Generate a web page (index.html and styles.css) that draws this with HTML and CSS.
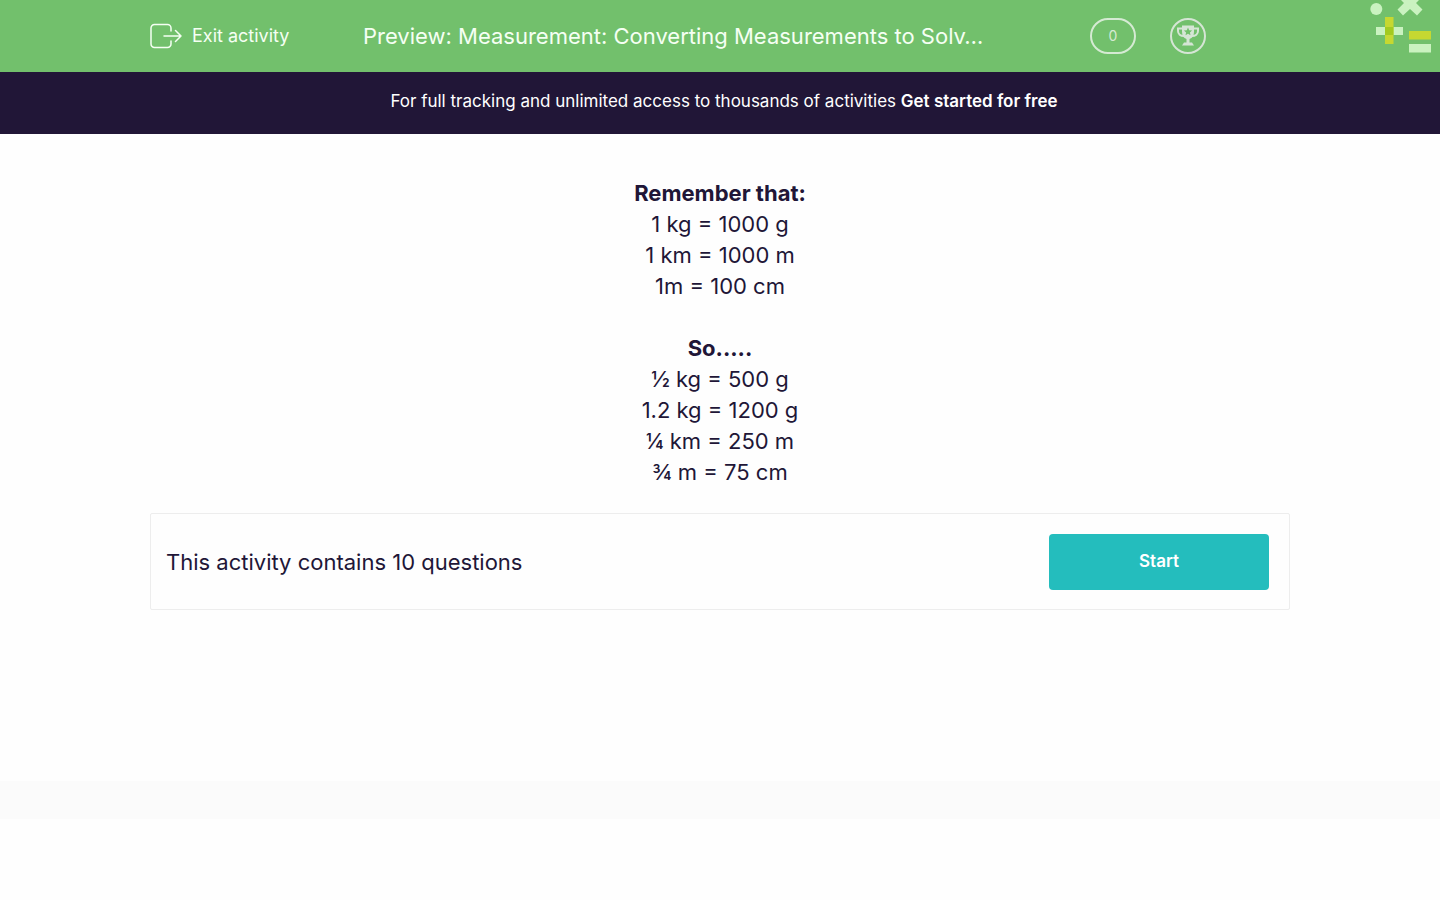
FILE: index.html
```html
<!DOCTYPE html>
<html lang="en">
<head>
<meta charset="utf-8">
<meta name="viewport" content="width=device-width, initial-scale=1">
<title>Preview: Measurement</title>
<link rel="stylesheet" href="styles.css">
</head>
<body>
<header class="topbar">
  <div class="container topbar-row">
    <a class="exit" href="#">
      <svg class="exit-icon" viewBox="0 0 32 26" aria-hidden="true"><path d="M21 8V5a3.500 3.500 0 0 0-3.500-3.500h-13A3.500 3.500 0 0 0 1 5v16a3.500 3.500 0 0 0 3.500 3.500h13A3.500 3.500 0 0 0 21 21v-3M14 13h17M25.500 7.500 31 13l-5.500 5.500"/></svg>
      <span>Exit activity</span>
    </a>
    <h1 class="title">Preview: Measurement: Converting Measurements to Solv…</h1>
    <div class="badges">
      <span class="score">0</span>
      <svg class="trophy" viewBox="0 0 36 36" role="img" aria-label="Trophy">
        <circle class="ring" cx="18" cy="18" r="17"/>
        <path class="handles" d="M12.500 10.500H8v2.500c0 3 2.500 5 6 5M23.500 10.500H28v2.500c0 3-2.500 5-6 5"/>
        <path class="cup" d="M12 7.500h12v6c0 4-1.500 6.500-4.500 7.500v3.500H22l2 3H12l2-3h2.500V21c-3-1-4.500-3.500-4.500-7.500z"/>
        <path class="star" d="m18 9.500 1.200 2.700 2.900.3-2.200 1.900.6 2.800-2.500-1.500-2.500 1.500.6-2.800-2.200-1.900 2.900-.3z"/>
      </svg>
    </div>
  </div>
  <svg class="maths" viewBox="0 0 80 72" aria-hidden="true">
    <g class="pale">
      <circle cx="16.300" cy="9" r="6"/>
      <path d="M41 0h18l-3 3 6.500 6.500-5.500 6-7-6.500-7 6.500-5.500-6L44 3zM16 27h27v8H16zM49 44h22v8.500H49z"/>
    </g>
    <path class="lime" d="M25 17h8.500v27H25zM49 31h22v8.500H49z"/>
    <path class="overlap" d="M25 27h8.500v8H25z"/>
  </svg>
</header>
<p class="promo">For full tracking and unlimited access to thousands of activities <a href="#">Get started for free</a></p>
<main class="container main">
  <p class="facts">
    <strong>Remember that:</strong><br>
    1 kg = 1000 g<br>
    1 km = 1000 m<br>
    1m = 100 cm<br>
    <br>
    <strong>So.....</strong><br>
    ½ kg = 500 g<br>
    1.2 kg = 1200 g<br>
    ¼ km = 250 m<br>
    ¾ m = 75 cm
  </p>
  <section class="start-panel">
    <p class="count">This activity contains 10 questions</p>
    <button class="start" type="button">Start</button>
  </section>
</main>
<footer class="footer"></footer>
</body>
</html>
```

FILE: styles.css
```css
* {
  box-sizing: border-box;
}

body {
  margin: 0;
  background: #fefefe;
  color: #211637;
  font-family: Inter, "Open Sans", sans-serif;
  font-size: 17px;
}

a {
  color: inherit;
  text-decoration: none;
}

.container {
  width: calc(100% - 32px);
  max-width: 1140px;
  margin: 0 auto;
}

.topbar {
  position: relative;
  background: #72c06c;
  color: #f5fff3;
}

.topbar-row {
  display: flex;
  align-items: center;
  min-height: 72px;
}

.exit {
  display: flex;
  flex: 0 0 213px;
  align-items: center;
  gap: 10px;
  font-size: 18px;
  line-height: 24px;
}

.exit-icon {
  width: 32px;
  height: 26px;
  fill: none;
  stroke: currentColor;
  stroke-width: 1.5;
  stroke-linecap: round;
  stroke-linejoin: round;
}

.title {
  flex: 1;
  min-width: 0;
  margin: 0;
  overflow: hidden;
  font-size: 22px;
  font-weight: 400;
  line-height: 32px;
  text-overflow: ellipsis;
  white-space: nowrap;
}

.badges {
  display: flex;
  flex: none;
  gap: 34px;
  padding-right: 84px;
}

.score {
  width: 46px;
  height: 36px;
  border: 2px solid #d5ead3;
  border-radius: 18px;
  color: #d5ead3;
  font-size: 14px;
  line-height: 32px;
  text-align: center;
}

.trophy {
  width: 36px;
  height: 36px;
}

.ring,
.handles {
  fill: none;
  stroke: #d5e5d5;
  stroke-width: 2;
}

.cup {
  fill: #d5e5d5;
}

.star {
  fill: #72c06c;
}

.maths {
  position: absolute;
  top: 0;
  right: 0;
  width: 80px;
  height: 72px;
}

.pale {
  fill: #caf2c0;
}

.lime {
  fill: #c6d831;
}

.overlap {
  fill: #a3ca20;
}

.promo {
  margin: 0;
  padding: 17px 16px 21px 24px;
  background: #211637;
  color: #fff;
  line-height: 24px;
  text-align: center;
}

.promo a {
  font-weight: 600;
}

.main {
  padding: 44px 0 171px;
}

.facts {
  margin: 0 0 25px;
  font-size: 22px;
  font-weight: 400;
  line-height: 31px;
  text-align: center;
}

.facts strong {
  font-weight: 700;
}

.start-panel {
  display: flex;
  align-items: center;
  justify-content: space-between;
  padding: 20px 20px 19px 15px;
  border: 1px solid #ededed;
  border-radius: 2px;
}

.count {
  margin: 0;
  font-size: 22px;
  font-weight: 400;
  line-height: 30px;
}

.start {
  width: 220px;
  height: 56px;
  padding: 0 0 3px;
  border: 0;
  border-radius: 4px;
  background: #24bdbd;
  color: #fff;
  font: inherit;
  font-weight: 600;
  cursor: pointer;
}

.footer {
  height: 38px;
  background: #fbfbfb;
}
```
